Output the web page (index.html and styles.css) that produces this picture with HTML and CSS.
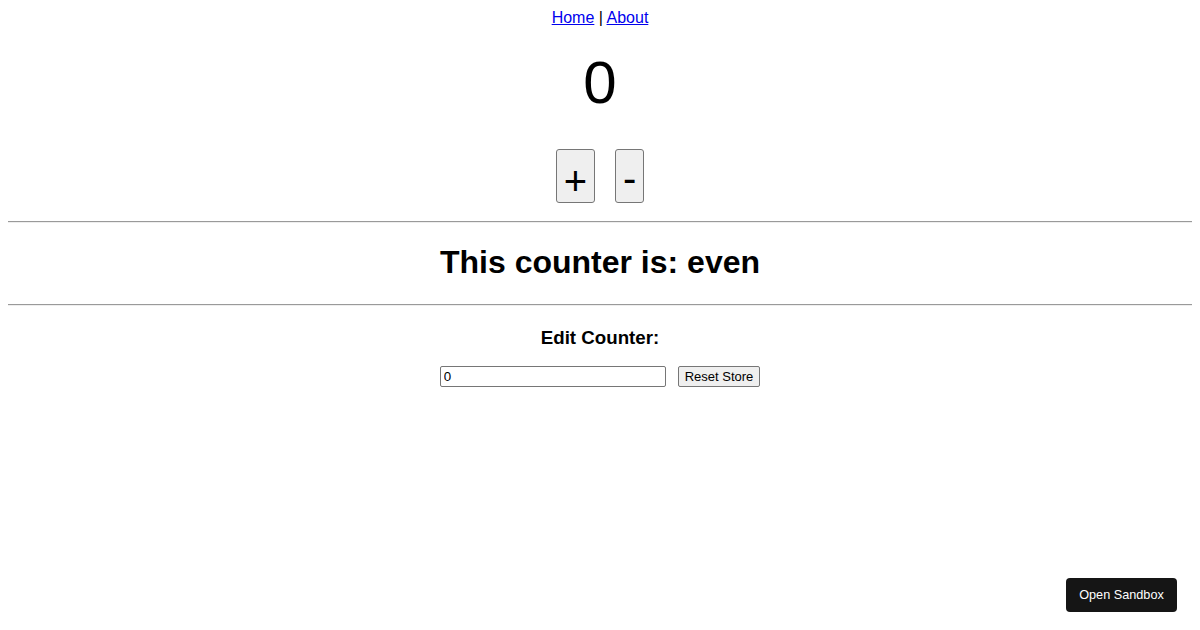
FILE: index.html
```html
<!DOCTYPE html>
<html>
<head>
<meta charset="utf-8">
<link rel="stylesheet" href="styles.css">
</head>
<body>
<div class="app">
  <nav class="nav"><a href="#">Home</a> | <a href="#">About</a></nav>
  <h1 class="count">0</h1>
  <div class="controls">
    <button class="big-btn">+</button>
    <button class="big-btn big-btn-minus">-</button>
  </div>
  <hr>
  <h1 class="parity">This counter is: even</h1>
  <hr>
  <h3 class="edit-title">Edit Counter:</h3>
  <div class="edit-row">
    <input class="edit-input" type="text" value="0">
    <button class="reset-btn">Reset Store</button>
  </div>
</div>
<button class="sandbox-btn">Open Sandbox</button>
</body>
</html>
```
FILE: styles.css
```css
body {
  margin: 8px;
  font-family: "Liberation Sans", Arial, sans-serif;
  background: #fff;
  color: #000;
}
.app {
  text-align: center;
}
.nav {
  font-size: 16px;
  padding-top: 1px;
}
.nav a {
  color: #0000ee;
}
.count {
  font-size: 60px;
  font-weight: normal;
  margin: 21px 0 32px;
}
.controls {
  display: flex;
  justify-content: center;
  gap: 20px;
}
.big-btn {
  box-sizing: border-box;
  font-family: "Liberation Sans", Arial, sans-serif;
  font-size: 40px;
  height: 54px;
  line-height: 40px;
  padding: 10px 7px 0;
  border: 1px solid #767676;
  border-radius: 3px;
  background: #efefef;
  color: #000;
}
.big-btn-minus {
  padding: 4px 7px 0;
}
hr {
  margin: 18px 0 0;
  border: none;
  border-top: 1px solid #9a9a9a;
  border-bottom: 1px solid #eeeeee;
}
.parity {
  font-size: 32px;
  margin: 21px 0 23px;
}
.edit-title {
  font-size: 18.72px;
  margin: 21px 0 17px;
}
.edit-row {
  display: flex;
  justify-content: center;
  gap: 12px;
}
.edit-input {
  box-sizing: border-box;
  width: 226px;
  height: 21px;
  font-family: "Liberation Sans", Arial, sans-serif;
  font-size: 13.33px;
  padding: 1px 3px;
  border: 1px solid #767676;
  border-radius: 2px;
}
.reset-btn {
  box-sizing: border-box;
  font-family: "Liberation Sans", Arial, sans-serif;
  font-size: 13px;
  height: 21px;
  padding: 1px 6px;
  border: 1px solid #767676;
  border-radius: 2px;
  background: #efefef;
  color: #000;
}
.sandbox-btn {
  position: fixed;
  right: 23px;
  bottom: 18px;
  background: #151515;
  color: #fff;
  border: none;
  border-radius: 4px;
  font-family: "Liberation Sans", Arial, sans-serif;
  font-size: 12.7px;
  padding: 0 12px;
  height: 34px;
  width: 111px;
}
```
